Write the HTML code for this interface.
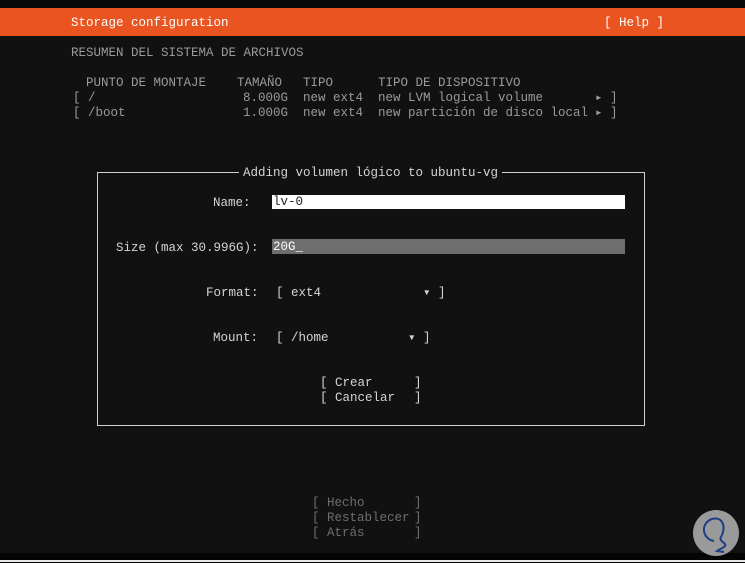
<!DOCTYPE html><html><head><meta charset="utf-8"><style>
body{margin:0;width:745px;height:563px;background:#111;overflow:hidden;position:relative;font-family:"Liberation Mono",monospace;font-size:12.5px;color:#d4d4d4}
.l{position:absolute;white-space:pre;line-height:15px;height:15px}
.d{color:#9a9a9a}.g{color:#6e6e6e}
</style></head><body>
<div style="position:absolute;left:0;top:0;width:745px;height:8px;background:#0a0a0a"></div>
<div style="position:absolute;left:0;top:8px;width:745px;height:28px;background:#e95420"></div>
<div class="l" style="left:71px;top:16px;color:#fff">Storage configuration</div>
<div class="l" style="left:604px;top:16px;color:#fff">[ Help ]</div>
<div class="l d" style="left:71px;top:46px">RESUMEN DEL SISTEMA DE ARCHIVOS</div>
<div class="l d" style="left:86px;top:76px">PUNTO DE MONTAJE</div>
<div class="l d" style="left:237px;top:76px">TAMAÑO</div>
<div class="l d" style="left:303px;top:76px">TIPO</div>
<div class="l d" style="left:378px;top:76px">TIPO DE DISPOSITIVO</div>
<div class="l d" style="left:73px;top:91px">[ /</div>
<div class="l d" style="left:243px;top:91px">8.000G</div>
<div class="l d" style="left:303px;top:91px">new ext4</div>
<div class="l d" style="left:378px;top:91px">new LVM logical volume</div>
<div class="l d" style="left:595px;top:91px">▸ ]</div>
<div class="l d" style="left:73px;top:106px">[ /boot</div>
<div class="l d" style="left:243px;top:106px">1.000G</div>
<div class="l d" style="left:303px;top:106px">new ext4</div>
<div class="l d" style="left:378px;top:106px">new partición de disco local</div>
<div class="l d" style="left:595px;top:106px">▸ ]</div>
<div style="position:absolute;left:97px;top:172px;width:546px;height:252px;border:1px solid #cfcfcf"></div>
<div class="l" style="left:239px;top:166px;background:#111;padding:0 4px">Adding volumen lógico to ubuntu-vg</div>
<div class="l" style="left:213px;top:196px">Name:</div>
<div style="position:absolute;left:272px;top:195px;width:353px;height:14px;background:#fff"></div>
<div class="l" style="left:273px;top:195px;color:#222">lv-0</div>
<div class="l" style="left:116px;top:241px">Size (max 30.996G):</div>
<div style="position:absolute;left:272px;top:239px;width:353px;height:15px;background:#6e6e6e"></div>
<div class="l" style="left:273px;top:240px;color:#fff">20G_</div>
<div class="l" style="left:206px;top:286px">Format:</div>
<div class="l" style="left:276px;top:286px">[ ext4</div>
<div class="l" style="left:423px;top:286px">▾ ]</div>
<div class="l" style="left:213px;top:331px">Mount:</div>
<div class="l" style="left:276px;top:331px">[ /home</div>
<div class="l" style="left:408px;top:331px">▾ ]</div>
<div class="l" style="left:320px;top:376px">[ Crear</div>
<div class="l" style="left:414px;top:376px">]</div>
<div class="l" style="left:320px;top:391px">[ Cancelar</div>
<div class="l" style="left:414px;top:391px">]</div>
<div class="l g" style="left:312px;top:496px">[ Hecho</div>
<div class="l g" style="left:414px;top:496px">]</div>
<div class="l g" style="left:312px;top:511px">[ Restablecer</div>
<div class="l g" style="left:414px;top:511px">]</div>
<div class="l g" style="left:312px;top:526px">[ Atrás</div>
<div class="l g" style="left:414px;top:526px">]</div>
<div style="position:absolute;left:0;top:553px;width:745px;height:10px;background:#050505"></div>
<div style="position:absolute;left:0;top:560px;width:745px;height:2px;background:#e8e8e8"></div>
<svg style="position:absolute;left:692px;top:509px" width="48" height="48" viewBox="0 0 48 48">
<circle cx="24" cy="24" r="23" fill="#9a9a9a"/>
<path d="M22 32 C10 30 8 14 20 10 C32 7 34 20 29 28 C27 31 31 33 33 35 C35 38 27 40 25 42 L32 43" fill="none" stroke="#1c3f8a" stroke-width="2"/>
</svg>
</body></html>
